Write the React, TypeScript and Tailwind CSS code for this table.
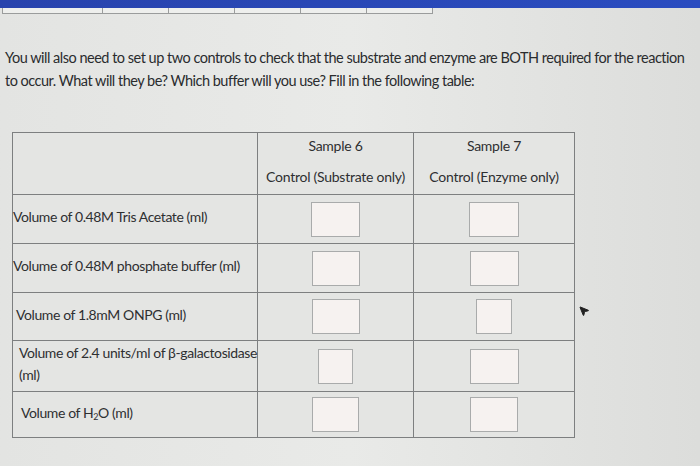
import { MousePointer2 } from "lucide-react";

const rows = [
	{ label: <>Volume of 0.48M Tris Acetate (ml)</>, h: "h-[49px]", pl: "pl-0", a: "w-[49px]", b: "w-[50px]" },
	{ label: <>Volume of 0.48M phosphate buffer (ml)</>, h: "h-[49px]", pl: "pl-0", a: "w-[48px]", b: "w-[49px]" },
	{ label: <>Volume of 1.8mM ONPG (ml)</>, h: "h-[48px]", pl: "pl-[3px]", a: "w-[48px]", b: "w-[36px]" },
	{
		label: (
			<>
				Volume of 2.4 units/ml of β-galactosidase
				<br />
				(ml)
			</>
		),
		h: "h-[51px]",
		pl: "pl-[6px]",
		a: "w-[35px]",
		b: "w-[49px]",
	},
	{
		label: (
			<>
				Volume of H<sub className="text-[9px]">2</sub>O (ml)
			</>
		),
		h: "h-[46px]",
		pl: "pl-[8px]",
		a: "w-[47px]",
		b: "w-[48px]",
	},
];

export default function App() {
	return (
		<div
			className="w-[700px] h-[466px] overflow-hidden bg-gradient-to-r from-[#e3e4e2] via-[#e9eae8] to-[#dcdddb] text-[#2a2b2c] relative"
			style={{ fontFamily: "Lato, 'Open Sans', sans-serif" }}
		>
			{/* top bar */}
			<div className="h-2 bg-gradient-to-r from-[#2843ad] to-[#2a4cc0]" />
			<div className="flex h-[6px] pl-[2px]">
				<div className="w-[101px] border border-t-0 border-[#9a9c9c] bg-[#eeefed]" />
				{[0, 1, 2, 3, 4].map((i) => (
					<div key={i} className="w-[66px] border border-t-0 border-l-0 border-[#9a9c9c] bg-[#eeefed]" />
				))}
			</div>

			{/* question */}
			<p className="mt-[32px] pl-[5px] whitespace-nowrap text-[14.5px] leading-[23px] tracking-[-0.5px] text-[#2a2c2e]">
				You will also need to set up two controls to check that the substrate and enzyme are BOTH required for the reaction
				<br />
				to occur. What will they be? Which buffer will you use? Fill in the following table:
			</p>

			{/* table */}
			<table className="mt-[40px] ml-[12px] w-[562px] table-fixed border-collapse text-[14px] tracking-[-0.25px] text-[#2e2f31]">
				<colgroup>
					<col className="w-[245px]" />
					<col className="w-[156px]" />
					<col className="w-[161px]" />
				</colgroup>
				<tbody>
					<tr className="h-[62px]">
						<td className="border border-[#7d7f80] bg-[#e4e5e3]" />
						<td className="border border-[#7d7f80] bg-[#e4e5e3] text-center align-top pt-[3px] whitespace-nowrap">
							<div className="leading-[20px]">Sample 6</div>
							<div className="leading-[20px] mt-[11px]">Control (Substrate only)</div>
						</td>
						<td className="border border-[#7d7f80] bg-[#e4e5e3] text-center align-top pt-[3px] whitespace-nowrap">
							<div className="leading-[20px]">Sample 7</div>
							<div className="leading-[20px] mt-[11px]">Control (Enzyme only)</div>
						</td>
					</tr>
					{rows.map((r, i) => (
						<tr key={i} className={r.h}>
							<td className={`border border-[#7d7f80] bg-[#e4e5e3] leading-[22px] whitespace-nowrap tracking-[-0.4px] ${r.pl}`}>
								<div className="-mt-[4px]">{r.label}</div>
							</td>
							<td className="border border-[#7d7f80] bg-[#e4e5e3]">
								<div className={`mx-auto h-[35px] ${r.a} border-[1.5px] border-[#a9abab] bg-[#f6f2f0]`} />
							</td>
							<td className="border border-[#7d7f80] bg-[#e4e5e3]">
								<div className={`mx-auto h-[35px] ${r.b} border-[1.5px] border-[#a9abab] bg-[#f6f2f0]`} />
							</td>
						</tr>
					))}
				</tbody>
			</table>

			{/* cursor */}
			<MousePointer2 className="absolute left-[578px] top-[305px] w-[12px] h-[12px] fill-[#222] text-[#222]" />
		</div>
	);
}
